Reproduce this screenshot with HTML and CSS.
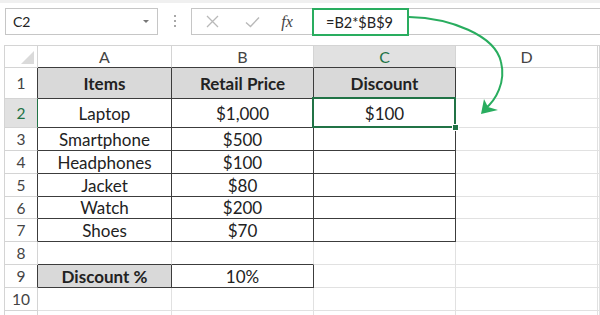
FILE: index.html
```html
<!DOCTYPE html>
<html lang="en">
<head>
    <meta charset="UTF-8">
    <meta name="viewport" content="width=device-width, initial-scale=1.0">
    <title>Discount sheet</title>
    <link rel="stylesheet" href="styles.css">
</head>
<body>
    <div class="app">
        <div class="formula-row">
            <div class="namebox"><span>C2</span><span class="caret"></span></div>
            <div class="grip"><span class="dots"></span></div>
            <div class="fbar">
                <span class="fbtn">
                    <svg width="13" height="13" viewBox="0 0 13 13"><path d="M1 1L12 12M12 1L1 12" stroke="#b9b9b9" stroke-width="1.3" fill="none"/></svg>
                </span>
                <span class="fbtn">
                    <svg width="15" height="12" viewBox="0 0 15 12"><path d="M1 6.5L5.5 10.5L14 1.5" stroke="#b9b9b9" stroke-width="1.4" fill="none"/></svg>
                </span>
                <span class="fbtn fx">fx</span>
                <div class="formula">=B2*$B$9</div>
            </div>
        </div>

        <div class="sheet">
            <!-- column headers -->
            <div class="c hd corner"></div>
            <div class="c hd db">A</div>
            <div class="c hd db">B</div>
            <div class="c hd db sel-col">C</div>
            <div class="c hd">D</div>
            <div class="c hd"></div>

            <!-- row 1 -->
            <div class="c rh dr">1</div>
            <div class="c t fill b">Items</div>
            <div class="c t fill b">Retail Price</div>
            <div class="c t fill b">Discount</div>
            <div class="c"></div>
            <div class="c"></div>

            <!-- row 2 -->
            <div class="c rh sel-row">2</div>
            <div class="c t">Laptop</div>
            <div class="c t">$1,000</div>
            <div class="c t active">$100</div>
            <div class="c"></div>
            <div class="c"></div>

            <div class="c rh dr">3</div>
            <div class="c t">Smartphone</div>
            <div class="c t">$500</div>
            <div class="c t"></div>
            <div class="c"></div>
            <div class="c"></div>

            <div class="c rh dr">4</div>
            <div class="c t">Headphones</div>
            <div class="c t">$100</div>
            <div class="c t"></div>
            <div class="c"></div>
            <div class="c"></div>

            <div class="c rh dr">5</div>
            <div class="c t">Jacket</div>
            <div class="c t">$80</div>
            <div class="c t"></div>
            <div class="c"></div>
            <div class="c"></div>

            <div class="c rh dr">6</div>
            <div class="c t">Watch</div>
            <div class="c t">$200</div>
            <div class="c t"></div>
            <div class="c"></div>
            <div class="c"></div>

            <div class="c rh dr">7</div>
            <div class="c t">Shoes</div>
            <div class="c t">$70</div>
            <div class="c t"></div>
            <div class="c"></div>
            <div class="c"></div>

            <div class="c rh">8</div>
            <div class="c db"></div>
            <div class="c db"></div>
            <div class="c"></div>
            <div class="c"></div>
            <div class="c"></div>

            <div class="c rh dr">9</div>
            <div class="c t fill b">Discount %</div>
            <div class="c t">10%</div>
            <div class="c"></div>
            <div class="c"></div>
            <div class="c"></div>

            <div class="c rh">10</div>
            <div class="c"></div>
            <div class="c"></div>
            <div class="c"></div>
            <div class="c"></div>
            <div class="c"></div>

            <div class="c rh"></div>
            <div class="c"></div>
            <div class="c"></div>
            <div class="c"></div>
            <div class="c"></div>
            <div class="c"></div>
        </div>

        <!-- annotation arrow from the formula to the result -->
        <svg class="arrow" width="600" height="315" viewBox="0 0 600 315">
            <path d="M409 17C450 18 495 35 501 62C506 82 496 100 485 109" stroke="#29ad5f" stroke-width="2" fill="none"/>
            <polygon points="481,114 484,99 488,107 498,110" fill="#29ad5f"/>
        </svg>
    </div>
</body>
</html>
```

FILE: styles.css
```css
body {
    margin: 0;
    background-color: #fff;
    font-family: Lato, "Open Sans", sans-serif;
    color: #222;
}
.app {
    position: relative;
    width: 600px;
    height: 315px;
    overflow: hidden;
}
.formula-row {
    display: flex;
    align-items: flex-start;
    box-sizing: border-box;
    height: 45px;
    border-top: 3px solid #f0f0f0;
    padding-top: 5px;
}
.namebox {
    display: flex;
    align-items: center;
    justify-content: space-between;
    box-sizing: border-box;
    margin-left: 5px;
    width: 153px;
    height: 27px;
    padding: 0 8px 0 7px;
    border: 1px solid #c6c6c6;
    font-size: 14px;
}
.caret {
    width: 0;
    height: 0;
    border-left: 3px solid transparent;
    border-right: 3px solid transparent;
    border-top: 3px solid #777;
}
.grip {
    display: flex;
    justify-content: center;
    width: 33px;
    height: 27px;
}
.dots {
    width: 2px;
    height: 2px;
    margin-top: 7px;
    background-color: #a8a8a8;
    box-shadow: 0 5px 0 #a8a8a8, 0 10px 0 #a8a8a8;
}
.fbar {
    display: flex;
    align-items: center;
    flex: 1;
    box-sizing: border-box;
    height: 27px;
    border: 1px solid #c6c6c6;
    border-right: none;
}
.fbtn {
    display: flex;
    align-items: center;
    justify-content: center;
    width: 40px;
}
.fx {
    width: 30px;
    margin-right: 11px;
    font-family: "Liberation Serif", serif;
    font-style: italic;
    font-size: 16px;
    color: #444;
}
.formula {
    display: flex;
    align-items: center;
    box-sizing: border-box;
    align-self: flex-start;
    width: 97px;
    height: 28px;
    margin-top: -1px;
    margin-left: -1px;
    padding-left: 12px;
    border: 2px solid #29ad5f;
    background-color: #fff;
    font-size: 14.5px;
}
.sheet {
    display: grid;
    grid-template-columns: 33px 134px 142px 142px 142px 1fr;
    grid-template-rows: 22px 31px 29px 23px 23px 23px 22px 23px 23px 23px 23px 23px;
    border-top: 1px solid #d4d4d4;
    border-left: 1px solid #d4d4d4;
    margin-left: 4px;
    font-size: 17px;
}
.c {
    display: flex;
    align-items: center;
    justify-content: center;
    box-sizing: border-box;
    border-right: 1px solid #e1e1e1;
    border-bottom: 1px solid #e1e1e1;
    white-space: nowrap;
}
.hd {
    border-color: #d4d4d4;
    color: #444;
    font-size: 16px;
}
.rh {
    border-color: #d4d4d4;
    color: #444;
    font-size: 15.5px;
}
.corner {
    position: relative;
}
.corner::after {
    content: "";
    position: absolute;
    right: 3px;
    bottom: 3px;
    width: 0;
    height: 0;
    border-left: 13px solid transparent;
    border-bottom: 13px solid #dadada;
}
.t {
    border-right-color: #3c3c3c;
    border-bottom-color: #3c3c3c;
}
.db {
    border-bottom-color: #3c3c3c;
}
.dr {
    border-right-color: #3c3c3c;
}
.fill {
    background-color: #d9d9d9;
}
.b {
    font-weight: bold;
}
.sel-col {
    background-color: #e1e1e1;
    color: #217346;
}
.sel-row {
    background-color: #e1e1e1;
    color: #217346;
    border-right-color: #217346;
}
.active {
    position: relative;
}
.active::before {
    content: "";
    position: absolute;
    left: -2px;
    top: -2px;
    right: -1px;
    bottom: -1px;
    border: 2px solid #217346;
}
.active::after {
    content: "";
    position: absolute;
    right: -4px;
    bottom: -4px;
    width: 5px;
    height: 5px;
    background-color: #217346;
    border: 1px solid #fff;
}
.arrow {
    position: absolute;
    left: 0;
    top: 0;
    pointer-events: none;
}
```
